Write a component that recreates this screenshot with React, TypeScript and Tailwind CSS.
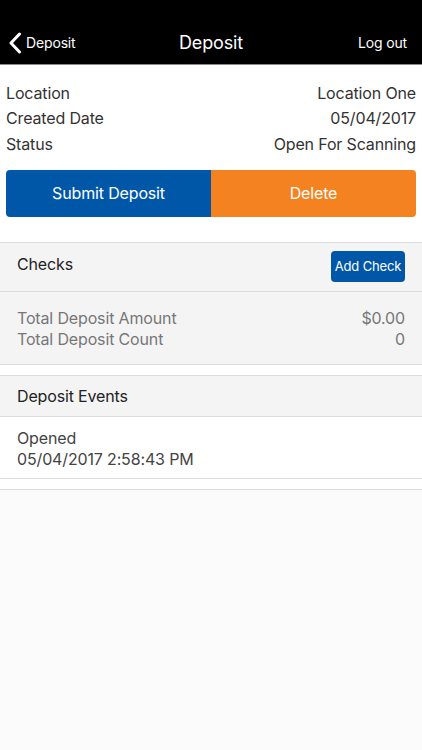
const font = { fontFamily: 'Inter, "Noto Sans", sans-serif', letterSpacing: '-0.15px' }

function InfoRow({ label, value }: { label: string; value: string }) {
  return (
    <div className="flex justify-between h-[25.5px] items-center text-[16px] text-[#333]">
      <span>{label}</span>
      <span>{value}</span>
    </div>
  )
}

export default function App() {
  return (
    <div className="w-[422px] h-[750px] bg-[#fbfbfb] flex flex-col" style={font}>
      {/* Nav bar */}
      <div className="bg-black h-[65px] pt-[20px] border-b border-[#8a8a8a]">
        <div className="h-[44px] flex items-center justify-between relative pl-[8px] pr-[15px]">
          <div className="flex items-center text-white text-[14px]">
            <svg width="14" height="22" viewBox="0 0 14 22" fill="none" className="mt-[1px]">
              <polyline points="11.5,2 3,11 11.5,20" stroke="white" strokeWidth="3" strokeLinecap="round" strokeLinejoin="round" />
            </svg>
            <span className="ml-[4px]">Deposit</span>
          </div>
          <div className="absolute left-0 right-0 text-center text-white text-[18px] pointer-events-none">
            Deposit
          </div>
          <span className="text-white text-[14px]">Log out</span>
        </div>
      </div>

      {/* Details */}
      <div className="bg-white px-[6px] pt-[15px] pb-[25px]">
        <InfoRow label="Location" value="Location One" />
        <InfoRow label="Created Date" value="05/04/2017" />
        <InfoRow label="Status" value="Open For Scanning" />
        <div className="flex mt-[13px] h-[47px] rounded-[4px] overflow-hidden text-white text-[16px]">
          <button className="flex-1 bg-[#0057a8]">Submit Deposit</button>
          <button className="flex-1 bg-[#f58220]">Delete</button>
        </div>
      </div>

      {/* Checks */}
      <div className="border-t border-b border-[#dcdcdc] bg-[#f4f4f4] h-[50px] flex items-center justify-between px-[17px]">
        <span className="text-[16px] text-[#222] -mt-[5px]">Checks</span>
        <button className="bg-[#0057a8] text-white text-[13px] rounded-[4px] w-[74px] h-[31px]">
          Add Check
        </button>
      </div>
      <div className="bg-[#f4f4f4] border-b border-[#dcdcdc] px-[17px] pt-[16px] pb-[14px] text-[16px] text-[#777]">
        <div className="flex justify-between h-[21px] items-center">
          <span>Total Deposit Amount</span>
          <span>$0.00</span>
        </div>
        <div className="flex justify-between h-[21px] items-center">
          <span>Total Deposit Count</span>
          <span>0</span>
        </div>
      </div>

      <div className="bg-white h-[10px]" />

      {/* Deposit events */}
      <div className="border-t border-b border-[#dcdcdc] bg-[#f4f4f4] h-[42px] flex items-center px-[17px] text-[16px] text-[#222]">
        Deposit Events
      </div>
      <div className="bg-white border-b border-[#dcdcdc] px-[17px] pt-[11px] pb-[8px] text-[16px] text-[#444]">
        <div className="h-[21px] flex items-center">Opened</div>
        <div className="h-[21px] flex items-center">05/04/2017 2:58:43 PM</div>
      </div>
      <div className="bg-white h-[11px] border-b border-[#dcdcdc]" />
    </div>
  )
}
